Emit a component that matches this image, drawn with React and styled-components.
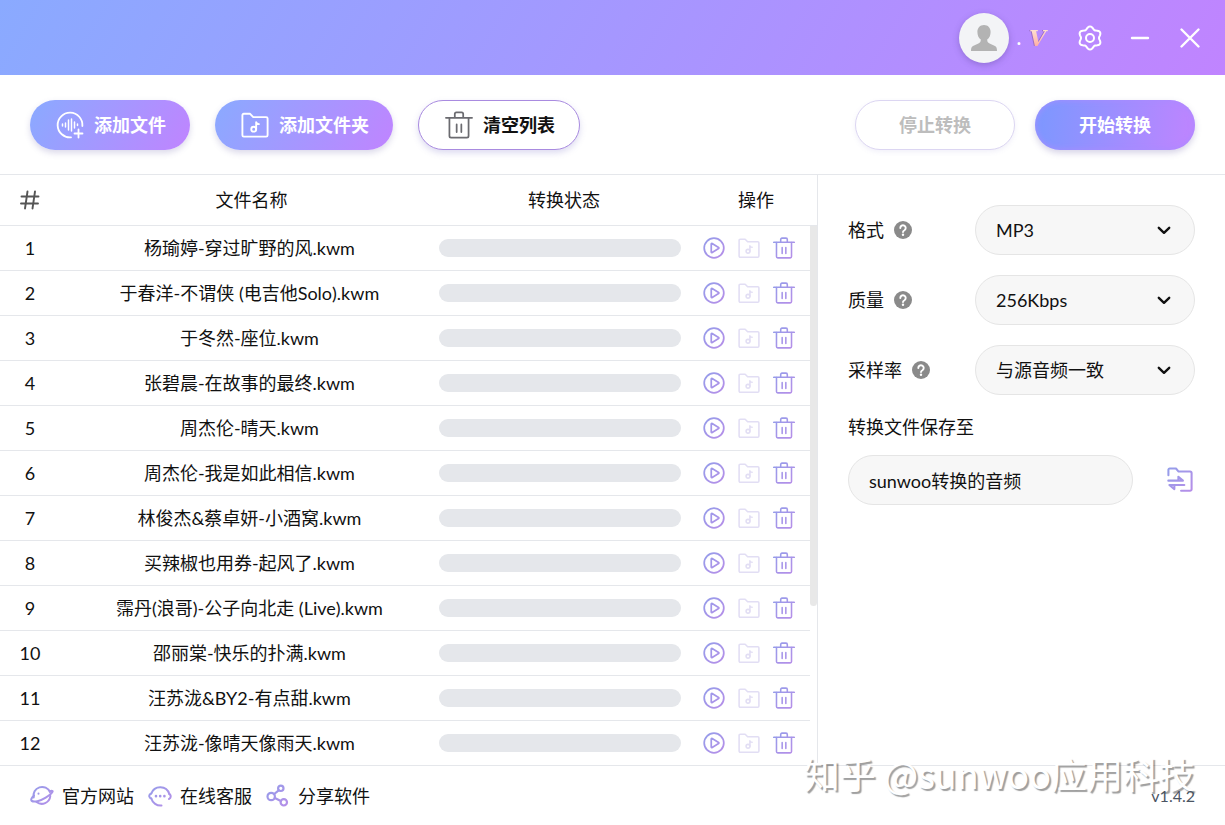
import React, { useState } from "react";
import styled, { createGlobalStyle, css } from "styled-components";

const GlobalStyle = createGlobalStyle`
  * {
    box-sizing: border-box;
  }
  body {
    margin: 0;
    background: #fff;
    color: #111;
    font-family: Lato, "Noto Sans CJK SC", sans-serif;
    font-size: 18px;
    line-height: 24px;
  }
  button,
  input,
  select {
    font: inherit;
    color: inherit;
  }
`;

const Window = styled.div`
  position: relative;
  display: flex;
  flex-direction: column;
  height: 100vh;
  overflow: hidden;
`;

const TitleBar = styled.header`
  display: flex;
  align-items: center;
  justify-content: flex-end;
  gap: 24px;
  height: 75px;
  flex-shrink: 0;
  padding: 0 22px;
  color: #fff;
  background: linear-gradient(120deg, #8aaaff, #c084ff);
`;

const User = styled.div`
  display: flex;
  align-items: center;
  gap: 8px;
  margin-right: 4px;
  font-weight: bold;
`;

const Avatar = styled.div`
  width: 50px;
  height: 50px;
  border-radius: 50%;
  background: #f3f4f6;
  box-shadow: 0 2px 6px rgba(80, 60, 140, 0.35);
`;

const VipMark = styled.span`
  width: 20px;
  font: italic bold 22px/26px "DejaVu Serif", serif;
  color: transparent;
  background: linear-gradient(180deg, #fff0dc, #ff9f9a);
  background-clip: text;
  filter: drop-shadow(-1px 0 0 #9a6cc4);
`;

const IconButton = styled.button`
  display: flex;
  align-items: center;
  justify-content: center;
  width: ${(p) => p.$size}px;
  height: ${(p) => p.$size}px;
  padding: 0;
  border: 0;
  background: none;
  color: inherit;
  cursor: pointer;
`;

const Toolbar = styled.div`
  display: flex;
  align-items: center;
  gap: 25px;
  height: 100px;
  flex-shrink: 0;
  padding: 0 30px;
  border-bottom: 1px solid #e5e7eb;
`;

const RunButtons = styled.div`
  display: flex;
  gap: 20px;
  margin-left: auto;
`;

const pill = css`
  display: flex;
  align-items: center;
  justify-content: center;
  height: 50px;
  border-radius: 25px;
  font-weight: bold;
  white-space: nowrap;
  cursor: pointer;
`;

const AddButton = styled.button`
  ${pill}
  gap: 10px;
  padding: 0 24px 0 26px;
  border: 0;
  color: #fff;
  background: linear-gradient(120deg, #8aaaff, #c084ff);
  box-shadow: 0 3px 6px rgba(90, 80, 160, 0.22);
`;

const ClearButton = styled.button`
  ${pill}
  gap: 10px;
  padding: 0 24px 0 26px;
  border: 1px solid #a98be0;
  color: #111;
  background: #fff;
  box-shadow: 0 3px 6px rgba(120, 110, 200, 0.25);

  svg {
    color: #6b6b70;
  }
`;

const StopButton = styled.button`
  ${pill}
  width: 160px;
  border: 1px solid #dcd6f2;
  color: #bdbdbd;
  background: #fff;
  box-shadow: 0 2px 5px rgba(120, 110, 200, 0.1);
`;

const StartButton = styled.button`
  ${pill}
  width: 160px;
  border: 0;
  color: #fff;
  background: linear-gradient(100deg, #7b98ff, #c084ff);
  box-shadow: 0 3px 6px rgba(90, 80, 160, 0.25), inset 0 0 6px #a98cff;
`;

const Body = styled.main`
  display: grid;
  grid-template-columns: minmax(0, 1fr) 407px;
  flex: 1;
  min-height: 0;
`;

const ListPane = styled.section`
  position: relative;
  min-height: 0;
  border-right: 1px solid #e5e7eb;
`;

const FileTable = styled.table`
  display: flex;
  flex-direction: column;
  height: 100%;

  thead,
  tbody {
    display: block;
  }
  tbody {
    flex: 1;
    min-height: 0;
    margin-right: 7px;
    overflow-y: auto;
    scrollbar-width: none;
  }
`;

const Row = styled.tr`
  display: grid;
  grid-template-columns: 60px 37fr 26fr 122px;
  align-items: center;
  height: ${(p) => (p.$head ? 51 : 45)}px;
  border-bottom: 1px solid #e5e7eb;

  th,
  td {
    padding: 0;
    font-weight: normal;
    text-align: center;
    white-space: nowrap;
  }
  th:nth-child(2),
  td:nth-child(2) {
    padding-left: 10px;
  }
`;

const HashCell = styled.th`
  display: flex;
  justify-content: center;
  color: #555;
`;

const Progress = styled.div`
  height: 18px;
  margin: 0 7px 0 10px;
  border-radius: 9px;
  background: #e5e7eb;
`;

const Actions = styled.div`
  display: flex;
  justify-content: center;
  gap: 13px;
`;

const ScrollThumb = styled.div`
  position: absolute;
  top: 51px;
  right: 0;
  width: 7px;
  height: calc((100% - 51px) * 0.705);
  border-radius: 0 0 4px 4px;
  background: #e8e8e8;
`;

const Settings = styled.aside`
  display: flex;
  flex-direction: column;
  gap: 20px;
  padding: 30px;
`;

const Field = styled.div`
  display: flex;
  align-items: center;
  justify-content: space-between;
  gap: 10px;
`;

const FieldLabel = styled.div`
  display: flex;
  align-items: center;
  gap: 10px;
  white-space: nowrap;
`;

const SelectBox = styled.div`
  position: relative;
  width: 220px;

  select {
    width: 100%;
    height: 50px;
    padding: 0 50px 0 20px;
    border: 1px solid #e5e5e5;
    border-radius: 25px;
    background: #f7f7f7;
    appearance: none;
  }
  svg {
    position: absolute;
    top: 18px;
    right: 24px;
    pointer-events: none;
  }
`;

const SaveField = styled.div`
  display: flex;
  flex-direction: column;
  gap: 16px;
`;

const PathInput = styled.input`
  flex: 1;
  min-width: 0;
  height: 50px;
  margin-right: 22px;
  padding: 0 20px;
  border: 1px solid #e5e5e5;
  border-radius: 25px;
  background: #f7f7f7;
`;

const Footer = styled.footer`
  display: flex;
  align-items: center;
  gap: 14px;
  height: 60px;
  flex-shrink: 0;
  padding: 0 30px;
  border-top: 1px solid #e5e7eb;
`;

const FooterLink = styled.a`
  display: flex;
  align-items: center;
  gap: 8px;
  color: inherit;
  text-decoration: none;
`;

// stays readable above the watermark
const Version = styled.span`
  position: relative;
  z-index: 1;
  margin-left: auto;
  font-size: 16px;
  color: #4b5563;
`;

const Watermark = styled.div`
  position: absolute;
  right: 30px;
  bottom: 28px;
  font: 36px/48px "Noto Sans CJK SC", sans-serif;
  color: #fff;
  text-shadow: 2px 2px 1px rgba(0, 0, 0, 0.38);
  white-space: nowrap;
  pointer-events: none;
`;

/* icons */

const Icon = ({ size = 24, box = 24, width = 2, color = "currentColor", children }) => (
  <svg
    width={size}
    height={size}
    viewBox={`0 0 ${box} ${box}`}
    fill="none"
    stroke={color}
    strokeWidth={width}
    strokeLinecap="round"
    strokeLinejoin="round"
    aria-hidden="true"
  >
    {children}
  </svg>
);

const violet = "url(#violet)";

const Defs = styled.svg`
  position: absolute;
`;

const Gradients = () => (
  <Defs width="0" height="0" aria-hidden="true">
    <linearGradient id="violet" gradientUnits="userSpaceOnUse" x1="0" y1="0" x2="24" y2="24">
      <stop offset="0" stopColor="#929eea" />
      <stop offset="1" stopColor="#b98de8" />
    </linearGradient>
  </Defs>
);

// six soft lobes round the centre
const gearPath =
  Array.from({ length: 72 }, (_, i) => {
    const a = (i * 5 * Math.PI) / 180;
    const r = 10.3 + 1.3 * Math.cos(6 * a);
    const x = 13 + r * Math.sin(a);
    const y = 13 - r * Math.cos(a);
    return `${i ? "L" : "M"}${x.toFixed(2)} ${y.toFixed(2)}`;
  }).join("") + "Z";

const GearIcon = () => (
  <Icon size={26} box={26} width={2}>
    <path d={gearPath} />
    <circle cx="13" cy="13" r="4" />
  </Icon>
);

const MinusIcon = () => (
  <Icon size={26} box={26} width={2.4}>
    <path d="M5 13h16" />
  </Icon>
);

const CloseIcon = () => (
  <Icon size={26} box={26} width={2.4}>
    <path d="M4.5 4.5l17 17M21.5 4.5l-17 17" />
  </Icon>
);

const PersonIcon = () => (
  <svg width="50" height="50" viewBox="0 0 50 50" fill="#b3b3b3" aria-hidden="true">
    <path d="M25 12c-4 0-6.600 2.800-6.600 7 0 3.200 1.200 6 3.400 7.600 0 2.200-.6 3.200-2.400 4L14 33c-1.500.8-2 2.200-2 5h26c0-2.800-.5-4.200-2-5l-5.400-2.400c-1.800-.8-2.400-1.800-2.400-4 2.200-1.600 3.400-4.400 3.400-7.600 0-4.200-2.600-7-6.600-7z" />
  </svg>
);

const AudioAddIcon = () => (
  <Icon size={28} box={28} width={1.8}>
    <path d="M26.400 15A12.400 12.400 0 1 0 15 26.400" />
    <path d="M6.500 13v2M9.500 12v4M12.500 9v10M15.500 8v12M18.500 11v6M21.500 13v1.500" strokeWidth="1.500" />
    <path d="M22.500 18.500v8M18.500 22.500h8" />
  </Icon>
);

const FolderMusicIcon = ({ size, color, width }) => (
  <Icon size={size} color={color} width={width}>
    <path d="M1.200 20.800V3.600a1.200 1.200 0 0 1 1.200-1.200h5.400L10.500 5.200h11.100a1.200 1.200 0 0 1 1.200 1.200v14.400a1.200 1.200 0 0 1-1.200 1.200H2.400a1.200 1.200 0 0 1-1.200-1.200z" />
    <circle cx="10.900" cy="15.600" r="2.100" />
    <path d="M13 15.600V9.600c.2 1 1 1.600 2.400 1.600" />
  </Icon>
);

const TrashIcon = ({ size, color, width }) => (
  <Icon size={size} color={color} width={width}>
    <path d="M.8 5.800h22.400M8.400 5.500V2.600A1.400 1.400 0 0 1 9.800 1.200h4.400a1.400 1.400 0 0 1 1.400 1.400v2.900" />
    <path d="M3.800 6v15.400a1.400 1.400 0 0 0 1.400 1.400h13.600a1.400 1.400 0 0 0 1.400-1.400V6M10 11.500v6.500M14 11.500v6.500" />
  </Icon>
);

const PlayIcon = () => (
  <Icon size={22} color={violet} width={1.9}>
    <circle cx="12" cy="12" r="10.700" />
    <path d="M9 7.600v8.800c0 .5.5.8 1 .5l7-4.300a.7.700 0 0 0 0-1.200l-7-4.300c-.5-.3-1 0-1 .5z" />
  </Icon>
);

const HashIcon = () => (
  <Icon size={20} box={20} width={1.9}>
    <path d="M1.500 6.500h17M1 13.500h17M7.500 1.500l-2.500 17M15 1.500l-2.500 17" />
  </Icon>
);

const HelpIcon = () => (
  <svg width="18" height="18" viewBox="0 0 18 18" fill="none" aria-hidden="true">
    <circle cx="9" cy="9" r="9" fill="#8a8a8a" />
    <path
      d="M6.300 7a2.700 2.700 0 1 1 4.200 2.200C9.500 9.800 9 10.100 9 11.100"
      stroke="#fff"
      strokeWidth="1.900"
      strokeLinecap="round"
    />
    <circle cx="9" cy="13.700" r="1.200" fill="#fff" />
  </svg>
);

const ChevronIcon = () => (
  <Icon size={14} box={14} width={2.4}>
    <path d="M1.800 4.800L7 9.800l5.200-5" />
  </Icon>
);

const FolderSwapIcon = () => (
  <Icon size={26} box={24} color={violet} width={1.9}>
    <path d="M1.300 7.500V2.600a1.200 1.200 0 0 1 1.200-1.200h5.800l2.400 2.800h10.600a1.400 1.400 0 0 1 1.400 1.400v15a1.400 1.400 0 0 1-1.400 1.400H13" />
    <path d="M1.200 12.600h13.500L10.500 9v3.200M16 16.600H2.200l4.600 3.800v-3.400" />
  </Icon>
);

const PlanetIcon = () => (
  <Icon color={violet} width={2}>
    <path d="M3.700 13.500A8.600 8.600 0 0 1 20 8.200M20.300 12A8.600 8.600 0 0 1 6.500 18" />
    <path d="M4 11.500C1.500 13.700.6 15.900 1.700 16.900c2 1.600 8.600.3 14-3.200 4.800-3 7.600-5.800 6.900-6.600-.6-.4-1.400-.4-2.600 0" />
    <path d="M8.500 9.500v.2" />
  </Icon>
);

const ServiceIcon = () => (
  <Icon color={violet} width={2}>
    <path d="M3.300 9.500A9.500 9.500 0 0 1 21.300 10M3.300 14.500A9.600 9.600 0 0 0 13.500 21.500" />
    <path d="M3.300 9.500C1.500 10 1 11.200 1.400 12.800c.3 1.100 1 1.700 1.900 1.700M21.300 10c1.500.8 1.800 2.400.9 4l-1.200 1" />
    <path d="M8 12v.2M12.200 12v.2M16.400 12v.2" strokeWidth="2.600" />
  </Icon>
);

const ShareIcon = () => (
  <Icon color={violet} width={2.2}>
    <circle cx="5.200" cy="12.500" r="3.700" />
    <circle cx="14.800" cy="4.300" r="2.700" />
    <circle cx="17.800" cy="18.300" r="3.200" />
    <path d="M8.200 10l4.500-3.700M8.800 14l6 3" />
  </Icon>
);

const files = [
  "杨瑜婷-穿过旷野的风.kwm",
  "于春洋-不谓侠 (电吉他Solo).kwm",
  "于冬然-座位.kwm",
  "张碧晨-在故事的最终.kwm",
  "周杰伦-晴天.kwm",
  "周杰伦-我是如此相信.kwm",
  "林俊杰&蔡卓妍-小酒窝.kwm",
  "买辣椒也用券-起风了.kwm",
  "霈丹(浪哥)-公子向北走 (Live).kwm",
  "邵丽棠-快乐的扑满.kwm",
  "汪苏泷&BY2-有点甜.kwm",
  "汪苏泷-像晴天像雨天.kwm",
];

const FileRow = ({ index, name }) => (
  <Row>
    <td>{index}</td>
    <td>{name}</td>
    <td>
      <Progress role="progressbar" aria-valuenow={0} aria-label={name} />
    </td>
    <td>
      <Actions>
        <IconButton $size={22} aria-label="播放">
          <PlayIcon />
        </IconButton>
        <IconButton $size={22} aria-label="打开文件夹" disabled>
          <FolderMusicIcon size={22} color="#e2def4" width={1.7} />
        </IconButton>
        <IconButton $size={22} aria-label="删除">
          <TrashIcon size={22} color={violet} width={1.7} />
        </IconButton>
      </Actions>
    </td>
  </Row>
);

const SelectField = ({ id, label, options }) => (
  <Field>
    <FieldLabel>
      <label htmlFor={id}>{label}</label>
      <HelpIcon />
    </FieldLabel>
    <SelectBox>
      <select id={id}>
        {options.map((o) => (
          <option key={o}>{o}</option>
        ))}
      </select>
      <ChevronIcon />
    </SelectBox>
  </Field>
);

const App = () => {
  const [folder, setFolder] = useState("sunwoo转换的音频");

  return (
    <Window>
      <GlobalStyle />
      <Gradients />
      <TitleBar>
        <User>
          <Avatar>
            <PersonIcon />
          </Avatar>
          <span>.</span>
          <VipMark>V</VipMark>
        </User>
        <IconButton $size={26} aria-label="设置">
          <GearIcon />
        </IconButton>
        <IconButton $size={26} aria-label="最小化">
          <MinusIcon />
        </IconButton>
        <IconButton $size={26} aria-label="关闭">
          <CloseIcon />
        </IconButton>
      </TitleBar>

      <Toolbar>
        <AddButton>
          <AudioAddIcon />
          添加文件
        </AddButton>
        <AddButton>
          <FolderMusicIcon size={28} width={1.6} />
          添加文件夹
        </AddButton>
        <ClearButton>
          <TrashIcon size={28} width={1.5} />
          清空列表
        </ClearButton>
        <RunButtons>
          <StopButton disabled>停止转换</StopButton>
          <StartButton>开始转换</StartButton>
        </RunButtons>
      </Toolbar>

      <Body>
        <ListPane>
          <FileTable>
            <thead>
              <Row $head>
                <HashCell aria-label="序号">
                  <HashIcon />
                </HashCell>
                <th>文件名称</th>
                <th>转换状态</th>
                <th>操作</th>
              </Row>
            </thead>
            <tbody>
              {files.map((name, i) => (
                <FileRow key={name} index={i + 1} name={name} />
              ))}
            </tbody>
          </FileTable>
          <ScrollThumb />
        </ListPane>

        <Settings>
          <SelectField id="format" label="格式" options={["MP3", "WAV", "FLAC"]} />
          <SelectField id="quality" label="质量" options={["256Kbps", "320Kbps"]} />
          <SelectField id="rate" label="采样率" options={["与源音频一致", "44100Hz"]} />
          <SaveField>
            <label htmlFor="folder">转换文件保存至</label>
            <Field>
              <PathInput id="folder" value={folder} onChange={(e) => setFolder(e.target.value)} />
              <IconButton $size={30} aria-label="选择文件夹">
                <FolderSwapIcon />
              </IconButton>
            </Field>
          </SaveField>
        </Settings>
      </Body>

      <Footer>
        <FooterLink href="#site">
          <PlanetIcon />
          官方网站
        </FooterLink>
        <FooterLink href="#service">
          <ServiceIcon />
          在线客服
        </FooterLink>
        <FooterLink href="#share">
          <ShareIcon />
          分享软件
        </FooterLink>
        <Version>v1.4.2</Version>
      </Footer>
      <Watermark>知乎 @sunwoo应用科技</Watermark>
    </Window>
  );
};

export default App;
